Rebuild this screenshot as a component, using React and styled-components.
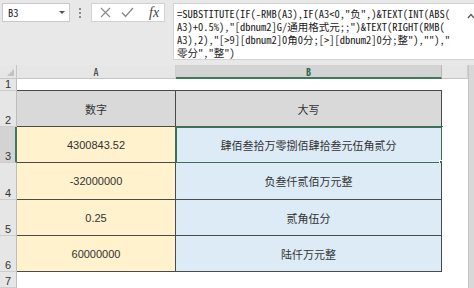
import React from 'react';
import styled, { createGlobalStyle } from 'styled-components';

const GlobalStyle = createGlobalStyle`
  html, body {
    margin: 0;
    padding: 0;
  }
  body {
    width: 474px;
    height: 288px;
    overflow: hidden;
    background: #e8e8e8;
    font-family: "Liberation Sans", "Noto Sans CJK SC", sans-serif;
  }
`;

const MONO = `"Noto Sans Mono CJK SC", "Liberation Mono", "Noto Sans CJK SC", monospace`;

const Window = styled.div`
  display: flex;
  flex-direction: column;
  width: 474px;
  height: 288px;
  overflow: hidden;
`;

const FormulaBar = styled.div`
  height: 65px;
  box-sizing: border-box;
  display: flex;
  align-items: flex-start;
  padding: 3px 0 0 2px;
  background: #e8e8e8;
`;

const NameBox = styled.div`
  width: 68px;
  height: 19px;
  box-sizing: border-box;
  background: #fff;
  border: 1px solid #c9c9c9;
  display: flex;
  align-items: center;
  justify-content: space-between;
  padding: 0 4px 0 5px;
  font-family: ${MONO};
  font-size: 10.5px;
  color: #222;
`;

const DropArrow = styled.span`
  width: 0;
  height: 0;
  border-left: 3px solid transparent;
  border-right: 3px solid transparent;
  border-top: 3px solid #555;
`;

const Grip = styled.div`
  width: 2px;
  height: 10px;
  margin: 5px 10px 0 9px;
  background: repeating-linear-gradient(to bottom, #8a8a8a 0 2px, transparent 2px 4px);
`;

const FxBox = styled.div`
  width: 74px;
  height: 19px;
  box-sizing: border-box;
  background: #fff;
  border: 1px solid #d2d2d2;
  display: flex;
  align-items: center;
  padding-left: 8px;
  gap: 10px;
  margin-right: 8px;
`;

const FxText = styled.span`
  font-family: "Liberation Serif", serif;
  font-style: italic;
  font-size: 14px;
  color: #444;
  margin-left: 5px;
`;

const FormulaBox = styled.div`
  flex: 1;
  height: 57px;
  box-sizing: border-box;
  background: #fff;
  border: 1px solid #d2d2d2;
  border-right: none;
  padding: 3px 0 0 3px;
  position: relative;
  font-family: ${MONO};
  font-size: 10.5px;
  line-height: 13px;
  color: #1a1a1a;
  white-space: pre;
  overflow: hidden;
`;

const Collapse = styled.svg`
  position: absolute;
  top: 9px;
  right: -1px;
`;

const Sheet = styled.div`
  flex: 1;
  display: flex;
`;

const Grid = styled.div`
  flex: 1;
  display: grid;
  grid-template-columns: 17px 159px 266px 1fr;
  grid-template-rows: 14px 12px 36px 36px 37px 36px 36px 1fr;
  background: #fff;
`;

const ScrollStrip = styled.div`
  width: 5px;
  background: #d8d8d8;
  border-left: 1px solid #c4c4c4;
`;

const Corner = styled.div`
  background: #e6e6e6;
  border-right: 1px solid #c6c6c6;
  border-bottom: 1px solid #c6c6c6;
  position: relative;
  &::after {
    content: '';
    position: absolute;
    right: 2px;
    bottom: 2px;
    border-left: 7px solid transparent;
    border-bottom: 7px solid #c2c2c2;
  }
`;

const ColHead = styled.div`
  background: ${p => (p.$active ? '#d3d3d3' : '#e6e6e6')};
  border-right: 1px solid ${p => (p.$active ? '#b8b8b8' : '#cfcfcf')};
  border-bottom: ${p => (p.$active ? '2px solid #3d7a5c' : '1px solid #c6c6c6')};
  box-sizing: border-box;
  display: flex;
  align-items: center;
  justify-content: center;
  font-family: ${MONO};
  font-size: 10px;
  color: ${p => (p.$active ? '#2f6b4f' : '#333')};
  font-weight: ${p => (p.$active ? 'bold' : 'normal')};
`;

const RowHead = styled.div`
  background: ${p => (p.$active ? '#d3d3d3' : '#e6e6e6')};
  border-right: ${p => (p.$active ? '2px solid #3d7a5c' : '1px solid #bdbdbd')};
  border-bottom: 1px solid #cdcdcd;
  box-sizing: border-box;
  display: flex;
  align-items: flex-end;
  padding: 0 0 0 5px;
  font-family: "Liberation Sans", sans-serif;
  font-size: 11px;
  line-height: 12px;
  color: #333;
`;

const Cell = styled.div`
  background: ${p => p.$bg || '#fff'};
  border-right: ${p => (p.$ruled ? '1px solid #4a4a4a' : 'none')};
  border-bottom: ${p => (p.$ruled || p.$under ? '1px solid #4a4a4a' : 'none')};
  box-sizing: border-box;
  display: flex;
  align-items: center;
  justify-content: center;
  font-family: ${p => (p.$cjk ? '"Noto Sans CJK SC", sans-serif' : '"Liberation Sans", sans-serif')};
  font-size: 11px;
  color: #333;
  position: relative;
`;

const SelectedCell = styled(Cell)`
  outline: 2px solid #3d6e58;
  outline-offset: -1px;
  &::after {
    content: '';
    position: absolute;
    right: -3px;
    bottom: -3px;
    width: 5px;
    height: 5px;
    background: #3d6e58;
    border: 1px solid #fff;
    box-sizing: border-box;
  }
`;

const formula = [
  '=SUBSTITUTE(IF(-RMB(A3),IF(A3<0,"负",)&TEXT(INT(ABS(',
  'A3)+0.5%),"[dbnum2]G/通用格式元;;")&TEXT(RIGHT(RMB(',
  'A3),2),"[>9][dbnum2]0角0分;[>][dbnum2]0分;整"),""),"',
  '零分","整")',
];

const rows = [
  { n: 3, a: '4300843.52', b: '肆佰叁拾万零捌佰肆拾叁元伍角贰分', h: true },
  { n: 4, a: '-32000000', b: '负叁仟贰佰万元整' },
  { n: 5, a: '0.25', b: '贰角伍分' },
  { n: 6, a: '60000000', b: '陆仟万元整' },
];

export default function App() {
  return (
    <Window>
      <GlobalStyle />
      <FormulaBar>
        <NameBox>
          B3
          <DropArrow />
        </NameBox>
        <Grip />
        <FxBox>
          <svg width="11" height="11" viewBox="0 0 11 11">
            <path d="M1 1L10 10M10 1L1 10" stroke="#8c8c8c" strokeWidth="1.2" fill="none" />
          </svg>
          <svg width="13" height="11" viewBox="0 0 13 11">
            <path d="M1 5.5L4.5 9.5L12 1" stroke="#8c8c8c" strokeWidth="1.4" fill="none" />
          </svg>
          <FxText>fx</FxText>
        </FxBox>
        <FormulaBox>
          {formula.join('\n')}
          <Collapse width="8" height="6" viewBox="0 0 8 6">
            <path d="M1 5L4 1.5L7 5" stroke="#555" strokeWidth="1.2" fill="none" />
          </Collapse>
        </FormulaBox>
      </FormulaBar>
      <Sheet>
        <Grid>
          <Corner />
          <ColHead>A</ColHead>
          <ColHead $active>B</ColHead>
          <ColHead />

          <RowHead>1</RowHead>
          <Cell $under />
          <Cell $under />
          <Cell />

          <RowHead>2</RowHead>
          <Cell $ruled $bg="#d9d9d9" $cjk>数字</Cell>
          <Cell $ruled $bg="#d9d9d9" $cjk>大写</Cell>
          <Cell />

          {rows.map(r => (
            <React.Fragment key={r.n}>
              <RowHead $active={r.h}>{r.n}</RowHead>
              <Cell $ruled $bg="#fff2cc">{r.a}</Cell>
              {r.h ? (
                <SelectedCell $ruled $bg="#ddebf7" $cjk>{r.b}</SelectedCell>
              ) : (
                <Cell $ruled $bg="#ddebf7" $cjk>{r.b}</Cell>
              )}
              <Cell />
            </React.Fragment>
          ))}

          <RowHead>7</RowHead>
          <Cell />
          <Cell />
          <Cell />
        </Grid>
        <ScrollStrip />
      </Sheet>
    </Window>
  );
}
